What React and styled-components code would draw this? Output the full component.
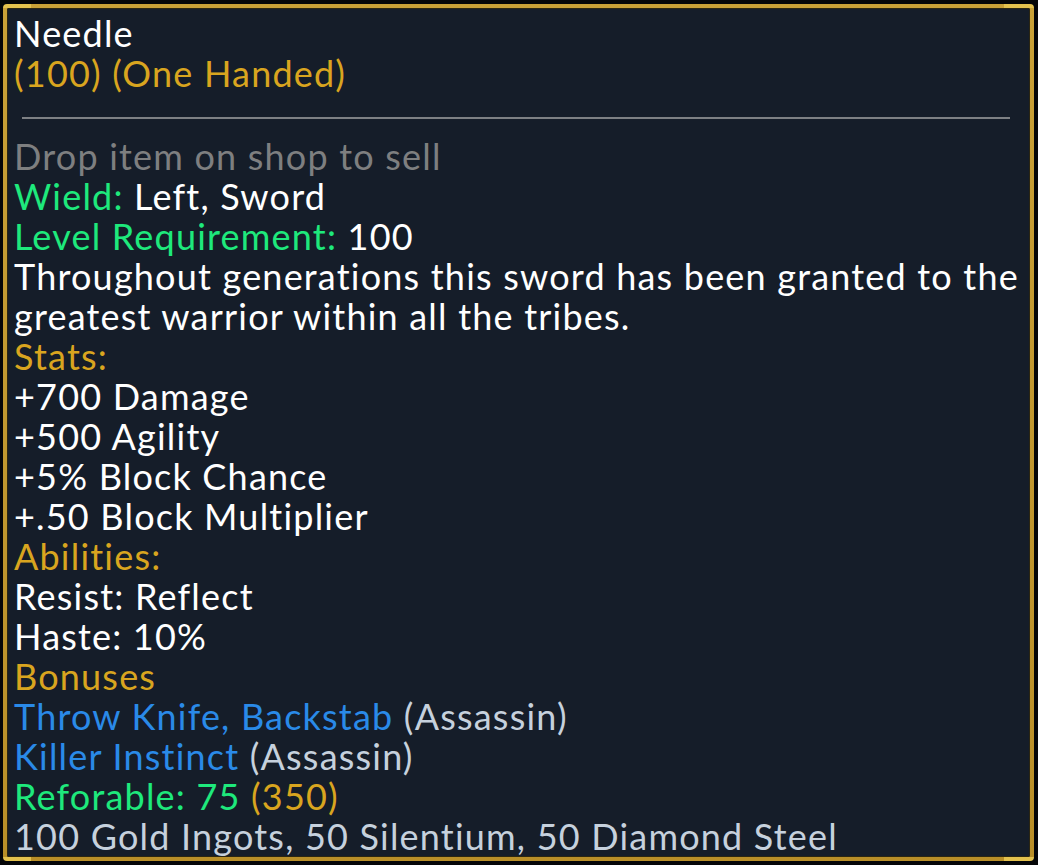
import React from 'react';
import styled, { createGlobalStyle } from 'styled-components';

const GlobalStyle = createGlobalStyle`
  html, body {
    margin: 0;
    padding: 0;
    background: #050608;
  }
`;

const Frame = styled.div`
  box-sizing: border-box;
  width: 1038px;
  height: 865px;
  padding: 4px 4px 4px 3px;
  background: #050608;
`;

/* gold frame, brighter pieces at the four corners */
const GoldBorder = styled.div`
  box-sizing: border-box;
  height: 100%;
  padding: 4px;
  border-radius: 4px;
  background:
    linear-gradient(#e4c24e, #e4c24e) left top / 28px 4px no-repeat,
    linear-gradient(#e4c24e, #e4c24e) right top / 30px 4px no-repeat,
    linear-gradient(#e4c24e, #e4c24e) left bottom / 28px 4px no-repeat,
    linear-gradient(#e4c24e, #e4c24e) right bottom / 30px 4px no-repeat,
    linear-gradient(180deg, #c9a137, #b98f28);
`;

const Tooltip = styled.div`
  box-sizing: border-box;
  height: 100%;
  border-radius: 2px;
  background: #151d29;
  padding: 5px 0 0 7px;
  font-family: Lato, 'Noto Sans', sans-serif;
  font-size: 36px;
  line-height: 40px;
  color: #ffffff;
  box-shadow: inset 0 0 0 1px #2b2612;
`;

const Line = styled.div`
  white-space: nowrap;
  letter-spacing: 1.2px;
  color: ${(p) => p.$color || '#ffffff'};
`;

const Span = styled.span`
  color: ${(p) => p.$color};
`;

const Divider = styled.hr`
  margin: 24px 20px 17px 8px;
  border: none;
  height: 2px;
  background: #7d8084;
`;

const GOLD = '#d9a51f';
const GREEN = '#1ee97c';
const BLUE = '#2a8ae8';
const GREY = '#7e7f80';
const PALE = '#c6d1dd';

export default function App() {
  return (
    <>
      <GlobalStyle />
      <Frame>
        <GoldBorder>
          <Tooltip>
            <Line>Needle</Line>
            <Line $color={GOLD}>(100) (One Handed)</Line>
            <Divider />
            <Line $color={GREY}>Drop item on shop to sell</Line>
            <Line>
              <Span $color={GREEN}>Wield:</Span> Left, Sword
            </Line>
            <Line>
              <Span $color={GREEN}>Level Requirement:</Span> 100
            </Line>
            <Line>Throughout generations this sword has been granted to the</Line>
            <Line>greatest warrior within all the tribes.</Line>
            <Line $color={GOLD}>Stats:</Line>
            <Line>+700 Damage</Line>
            <Line>+500 Agility</Line>
            <Line>+5% Block Chance</Line>
            <Line>+.50 Block Multiplier</Line>
            <Line $color={GOLD}>Abilities:</Line>
            <Line>Resist: Reflect</Line>
            <Line>Haste: 10%</Line>
            <Line $color={GOLD}>Bonuses</Line>
            <Line $color={PALE}>
              <Span $color={BLUE}>Throw Knife, Backstab</Span> (Assassin)
            </Line>
            <Line $color={PALE}>
              <Span $color={BLUE}>Killer Instinct</Span> (Assassin)
            </Line>
            <Line $color={GREEN}>
              Reforable: 75 <Span $color={GOLD}>(350)</Span>
            </Line>
            <Line $color={PALE}>100 Gold Ingots, 50 Silentium, 50 Diamond Steel</Line>
          </Tooltip>
        </GoldBorder>
      </Frame>
    </>
  );
}
